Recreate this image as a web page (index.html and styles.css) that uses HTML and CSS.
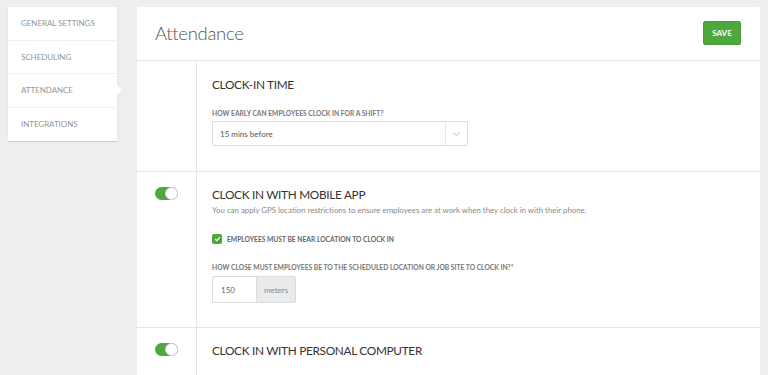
FILE: index.html
```html
<!DOCTYPE html>
<html>
<head>
<meta charset="utf-8">
<link rel="stylesheet" href="styles.css">
</head>
<body>
<div class="page">
  <nav class="side">
    <div class="side-item">GENERAL SETTINGS</div>
    <div class="side-item">SCHEDULING</div>
    <div class="side-item active">ATTENDANCE</div>
    <div class="side-item">INTEGRATIONS</div>
  </nav>
  <main class="card">
    <header class="card-head">
      <h1 class="title">Attendance</h1>
      <button class="save">SAVE</button>
    </header>
    <section class="sec">
      <div class="sec-left"></div>
      <div class="sec-body first">
        <h2 class="sec-title">CLOCK-IN TIME</h2>
        <div class="label">HOW EARLY CAN EMPLOYEES CLOCK IN FOR A SHIFT?</div>
        <div class="select">
          <span class="select-val">15 mins before</span>
          <span class="select-arrow"><svg width="7" height="4" viewBox="0 0 7 4"><path d="M0.5 0.5l3 3 3-3" fill="none" stroke="#b0b0b0" stroke-width="0.9"/></svg></span>
        </div>
      </div>
    </section>
    <section class="sec">
      <div class="sec-left"><span class="toggle"><span class="knob"></span></span></div>
      <div class="sec-body">
        <h2 class="sec-title">CLOCK IN WITH MOBILE APP</h2>
        <p class="desc">You can apply GPS location restrictions to ensure employees are at work when they clock in with their phone.</p>
        <div class="check-row">
          <span class="check"><svg width="7" height="6" viewBox="0 0 7 6"><path d="M1.2 3l1.6 1.6L5.8 1.4" fill="none" stroke="#fff" stroke-width="1.3"/></svg></span>
          <span class="check-label">EMPLOYEES MUST BE NEAR LOCATION TO CLOCK IN</span>
        </div>
        <div class="label">HOW CLOSE MUST EMPLOYEES BE TO THE SCHEDULED LOCATION OR JOB SITE TO CLOCK IN?*</div>
        <div class="group">
          <span class="group-input">150</span>
          <span class="group-addon">meters</span>
        </div>
      </div>
    </section>
    <section class="sec last">
      <div class="sec-left"><span class="toggle"><span class="knob"></span></span></div>
      <div class="sec-body">
        <h2 class="sec-title">CLOCK IN WITH PERSONAL COMPUTER</h2>
      </div>
    </section>
  </main>
</div>
</body>
</html>
```
FILE: styles.css
```css
* { box-sizing: border-box; }
html, body { margin: 0; padding: 0; }
body {
  background: #eeeeee;
  font-family: Lato, "Open Sans", sans-serif;
  color: #333;
  width: 768px;
  height: 375px;
  overflow: hidden;
}
.page {
  display: flex;
  align-items: flex-start;
  padding: 7px 8px 0 8px;
  gap: 20px;
}
.side {
  width: 109px;
  background: #fff;
  box-shadow: 0 1px 1px rgba(0,0,0,0.12);
  flex: none;
}
.side-item {
  position: relative;
  height: 33.5px;
  display: flex;
  align-items: center;
  padding-left: 13px;
  font-size: 8px;
  color: #959595;
  letter-spacing: -0.05px;
  border-bottom: 1px solid #f0f0f0;
}
.side-item:last-child { border-bottom: none; }
.side-item.active::after {
  content: "";
  position: absolute;
  right: -5px;
  top: 50%;
  margin-top: -5px;
  border-left: 5px solid #fff;
  border-top: 5px solid transparent;
  border-bottom: 5px solid transparent;
}
.card {
  flex: 1;
  background: #fff;
  min-height: 380px;
  border-radius: 2px;
}
.card-head {
  height: 54px;
  display: flex;
  align-items: center;
  justify-content: space-between;
  padding: 0 19px 0 18px;
  border-bottom: 1px solid #e6e6e6;
}
.title {
  margin: 0 0 1px 0;
  font-weight: 300;
  font-size: 18.5px;
  color: #555;
  letter-spacing: -0.3px;
}
.save {
  background: #4ea83d;
  border: 1px solid #46a036;
  color: #fff;
  font-family: inherit;
  font-weight: 700;
  font-size: 8px;
  width: 38px;
  height: 24px;
  border-radius: 2px;
  padding: 0;
  margin-top: -1px;
}
.sec {
  display: flex;
  border-bottom: 1px solid #e6e6e6;
}
.sec.last { border-bottom: none; }
.sec-left {
  width: 60px;
  flex: none;
  border-right: 1px solid #e6e6e6;
  padding: 15px 0 0 18px;
}
.sec-body {
  flex: 1;
  padding: 15px 16px 24px 15px;
}
.sec-body.first { padding-top: 16px; padding-bottom: 25px; }
.sec.last .sec-body { padding-top: 15px; padding-bottom: 20px; }
.sec-title {
  margin: 0;
  font-size: 11.8px;
  font-weight: 400;
  color: #333;
  line-height: 16px;
  letter-spacing: -0.3px;
}
.label {
  font-size: 6.7px;
  font-weight: 700;
  color: #777;
  margin-top: 18px;
  line-height: 10px;
}
.sec-body.first .label { margin-top: 15px; }
.select {
  margin-top: 3px;
  width: 256px;
  height: 25px;
  border: 1px solid #dcdcdc;
  border-radius: 2px;
  display: flex;
  align-items: center;
}
.select-val {
  flex: 1;
  font-size: 8px;
  color: #555;
  padding-left: 7px;
}
.select-arrow {
  width: 22px;
  height: 100%;
  border-left: 1px solid #e6e6e6;
  display: flex;
  align-items: center;
  justify-content: center;
}
.desc {
  margin: 2px 0 0 0;
  font-size: 7.85px;
  color: #888;
  line-height: 11px;
}
.check-row {
  display: flex;
  align-items: center;
  gap: 5px;
  margin-top: 18px;
}
.check {
  width: 10px;
  height: 10px;
  background: #4ea83d;
  border-radius: 2px;
  display: flex;
  align-items: center;
  justify-content: center;
}
.check-label {
  font-size: 6.7px;
  font-weight: 700;
  color: #666;
}
.group {
  margin-top: 4px;
  display: flex;
  width: 84px;
  height: 27px;
  border: 1px solid #dcdcdc;
  border-radius: 2px;
}
.group-input {
  width: 43px;
  font-size: 8px;
  color: #666;
  display: flex;
  align-items: center;
  padding-left: 8px;
}
.group-addon {
  flex: 1;
  background: #e9ebed;
  border-left: 1px solid #dcdcdc;
  font-size: 8px;
  color: #888;
  display: flex;
  align-items: center;
  justify-content: center;
}
.toggle {
  display: block;
  width: 23px;
  height: 13px;
  background: #4ea83d;
  border-radius: 7px;
  position: relative;
}
.knob {
  position: absolute;
  right: 0;
  top: 0;
  width: 13px;
  height: 13px;
  background: #fff;
  border-radius: 50%;
  border: 1px solid #d8d8d8;
}
```
